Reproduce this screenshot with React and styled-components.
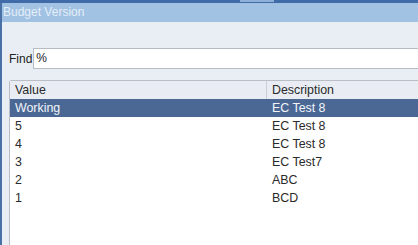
import React from 'react';
import styled, { createGlobalStyle } from 'styled-components';

const GlobalStyle = createGlobalStyle`
  html, body {
    margin: 0;
    padding: 0;
    width: 418px;
    height: 245px;
    overflow: hidden;
    background: #e9eef5;
    font-family: "Liberation Sans", Arial, sans-serif;
  }
`;

const rows = [
  { value: 'Working', desc: 'EC Test 8' },
  { value: '5', desc: 'EC Test 8' },
  { value: '4', desc: 'EC Test 8' },
  { value: '3', desc: 'EC Test7' },
  { value: '2', desc: 'ABC' },
  { value: '1', desc: 'BCD' },
];

const Screen = styled.div`
  width: 418px;
  height: 245px;
  display: flex;
  flex-direction: column;
  overflow: hidden;
`;

const TopStrip = styled.div`
  height: 3px;
  background: #3f6ca8;
  display: flex;
  padding-left: 240px;
`;

const StripTab = styled.div`
  width: 34px;
  height: 2px;
  background: #8fb1d8;
`;

const Window = styled.div`
  flex: 1;
  display: flex;
  flex-direction: column;
  border-left: 2px solid #4a71a6;
  background: #e9eef5;
`;

const TitleBar = styled.div`
  height: 19px;
  background: #a2c2e3;
  color: #e4eef8;
  font-size: 12px;
  line-height: 19px;
  padding-left: 1px;
`;

const Body = styled.div`
  flex: 1;
  display: flex;
  flex-direction: column;
  padding: 26px 0 0 7px;
`;

const FindRow = styled.div`
  display: flex;
  align-items: center;
  height: 21px;
`;

const Label = styled.span`
  font-size: 12px;
  color: #222;
  margin-right: 1px;
`;

const FindInput = styled.div`
  flex: 1;
  height: 19px;
  border: 1px solid #b7bcc4;
  border-right: none;
  background: #fff;
  font-size: 12px;
  line-height: 19px;
  padding-left: 2px;
  color: #222;
`;

const Table = styled.div`
  margin-top: 11px;
  flex: 1;
  background: #fff;
  border: 1px solid #b9bec6;
  border-right: none;
  border-bottom: none;
  border-top-left-radius: 3px;
  display: flex;
  flex-direction: column;
`;

const Row = styled.div`
  display: grid;
  grid-template-columns: 256px 1fr;
  height: 18px;
  font-size: 12.4px;
  line-height: 18px;
  background: ${p => (p.$head ? '#e9edf3' : p.$selected ? '#4b6894' : '#fff')};
  color: ${p => (p.$selected ? '#f2f5fa' : '#2a2a2a')};
`;

const Cell = styled.div`
  padding-left: ${p => (p.$divider ? '5px' : p.$desc ? '6px' : '5px')};
  border-left: ${p => (p.$divider ? '1px solid #c9cdd4' : 'none')};
  white-space: nowrap;
`;

export default function App() {
  return (
    <Screen>
      <GlobalStyle />
      <TopStrip>
        <StripTab />
      </TopStrip>
      <Window>
        <TitleBar>Budget Version</TitleBar>
        <Body>
          <FindRow>
            <Label>Find</Label>
            <FindInput>%</FindInput>
          </FindRow>
          <Table>
            <Row $head>
              <Cell>Value</Cell>
              <Cell $divider>Description</Cell>
            </Row>
            {rows.map((r, i) => (
              <Row key={r.value} $selected={i === 0}>
                <Cell>{r.value}</Cell>
                <Cell $desc>{r.desc}</Cell>
              </Row>
            ))}
          </Table>
        </Body>
      </Window>
    </Screen>
  );
}
